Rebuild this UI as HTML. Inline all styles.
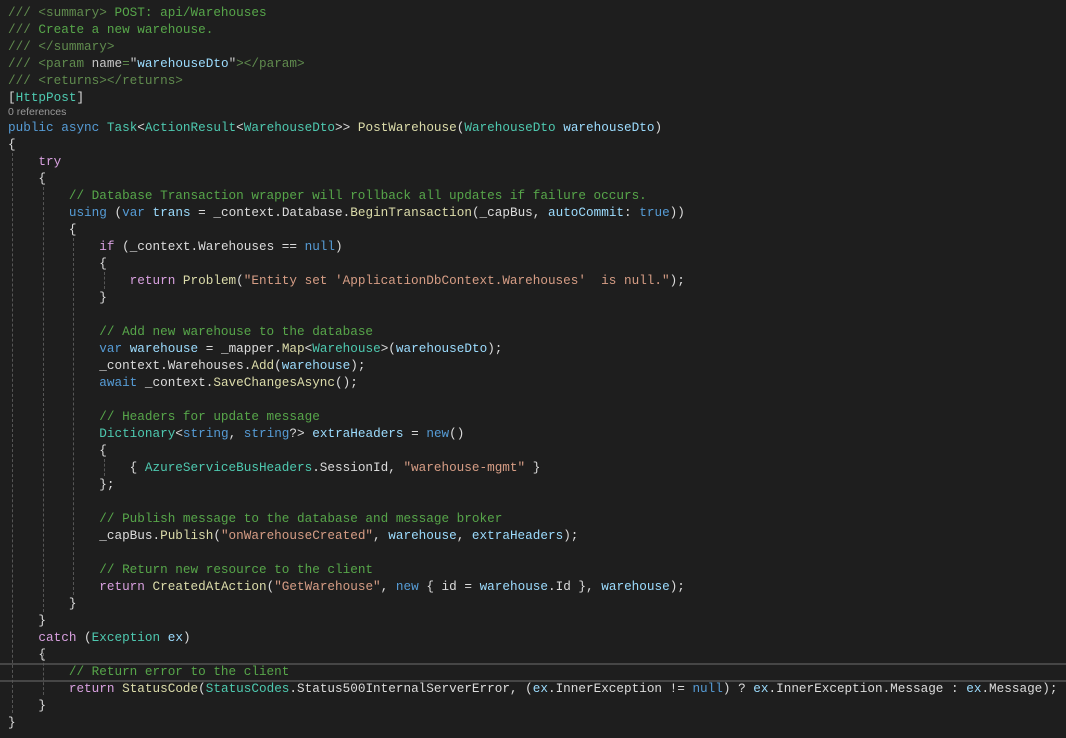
<!DOCTYPE html>
<html><head><meta charset="utf-8"><style>
html,body{margin:0;padding:0;background:#1e1e1e;width:1066px;height:738px;overflow:hidden}
#c{position:absolute;left:8px;top:4px;font-family:"Liberation Mono",monospace;font-size:12.68px;color:#dcdcdc;white-space:pre}
.l{height:17px;line-height:17px}
.r{height:13px;line-height:13px;font-family:"Liberation Sans",sans-serif;font-size:10.5px;color:#999}
.c{color:#57a64a}.d{color:#608b4e}.k{color:#569cd6}.p{color:#d8a0df}.t{color:#4ec9b0}.m{color:#dcdcaa}.v{color:#9cdcfe}.s{color:#d69d85}.a{color:#c8c8c8}
.g{position:absolute;width:0;border-left:1px dashed #555}
#hl{position:absolute;left:0;width:1066px;top:663px;height:15px;border-top:2px solid #464646;border-bottom:2px solid #464646}
</style></head><body>
<div id="hl"></div>
<div class="g" style="left:12px;top:153px;height:560px"></div>
<div class="g" style="left:43px;top:187px;height:425px"></div>
<div class="g" style="left:43px;top:653px;height:42px"></div>
<div class="g" style="left:73px;top:238px;height:357px"></div>
<div class="g" style="left:104px;top:272px;height:17px"></div>
<div class="g" style="left:104px;top:459px;height:17px"></div>
<div id="c"><div class="l"><span class="d">/// &lt;summary&gt;</span><span class="c"> POST: api/Warehouses</span></div><div class="l"><span class="d">///</span><span class="c"> Create a new warehouse.</span></div><div class="l"><span class="d">/// &lt;/summary&gt;</span></div><div class="l"><span class="d">/// &lt;param </span><span class="a">name</span><span class="d">=</span><span class="a">"</span><span class="v">warehouseDto</span><span class="a">"</span><span class="d">&gt;&lt;/param&gt;</span></div><div class="l"><span class="d">/// &lt;returns&gt;&lt;/returns&gt;</span></div><div class="l">[<span class="t">HttpPost</span>]</div><div class="r">0 references</div><div class="l"><span class="k">public async</span> <span class="t">Task</span>&lt;<span class="t">ActionResult</span>&lt;<span class="t">WarehouseDto</span>&gt;&gt; <span class="m">PostWarehouse</span>(<span class="t">WarehouseDto</span> <span class="v">warehouseDto</span>)</div><div class="l">{</div><div class="l">    <span class="p">try</span></div><div class="l">    {</div><div class="l">        <span class="c">// Database Transaction wrapper will rollback all updates if failure occurs.</span></div><div class="l">        <span class="k">using</span> (<span class="k">var</span> <span class="v">trans</span> = _context.Database.<span class="m">BeginTransaction</span>(_capBus, <span class="v">autoCommit</span>: <span class="k">true</span>))</div><div class="l">        {</div><div class="l">            <span class="p">if</span> (_context.Warehouses == <span class="k">null</span>)</div><div class="l">            {</div><div class="l">                <span class="p">return</span> <span class="m">Problem</span>(<span class="s">"Entity set 'ApplicationDbContext.Warehouses'  is null."</span>);</div><div class="l">            }</div><div class="l"> </div><div class="l">            <span class="c">// Add new warehouse to the database</span></div><div class="l">            <span class="k">var</span> <span class="v">warehouse</span> = _mapper.<span class="m">Map</span>&lt;<span class="t">Warehouse</span>&gt;(<span class="v">warehouseDto</span>);</div><div class="l">            _context.Warehouses.<span class="m">Add</span>(<span class="v">warehouse</span>);</div><div class="l">            <span class="k">await</span> _context.<span class="m">SaveChangesAsync</span>();</div><div class="l"> </div><div class="l">            <span class="c">// Headers for update message</span></div><div class="l">            <span class="t">Dictionary</span>&lt;<span class="k">string</span>, <span class="k">string</span>?&gt; <span class="v">extraHeaders</span> = <span class="k">new</span>()</div><div class="l">            {</div><div class="l">                { <span class="t">AzureServiceBusHeaders</span>.SessionId, <span class="s">"warehouse-mgmt"</span> }</div><div class="l">            };</div><div class="l"> </div><div class="l">            <span class="c">// Publish message to the database and message broker</span></div><div class="l">            _capBus.<span class="m">Publish</span>(<span class="s">"onWarehouseCreated"</span>, <span class="v">warehouse</span>, <span class="v">extraHeaders</span>);</div><div class="l"> </div><div class="l">            <span class="c">// Return new resource to the client</span></div><div class="l">            <span class="p">return</span> <span class="m">CreatedAtAction</span>(<span class="s">"GetWarehouse"</span>, <span class="k">new</span> { id = <span class="v">warehouse</span>.Id }, <span class="v">warehouse</span>);</div><div class="l">        }</div><div class="l">    }</div><div class="l">    <span class="p">catch</span> (<span class="t">Exception</span> <span class="v">ex</span>)</div><div class="l">    {</div><div class="l">        <span class="c">// Return error to the client</span></div><div class="l">        <span class="p">return</span> <span class="m">StatusCode</span>(<span class="t">StatusCodes</span>.Status500InternalServerError, (<span class="v">ex</span>.InnerException != <span class="k">null</span>) ? <span class="v">ex</span>.InnerException.Message : <span class="v">ex</span>.Message);</div><div class="l">    }</div><div class="l">}</div></div>
</body></html>
